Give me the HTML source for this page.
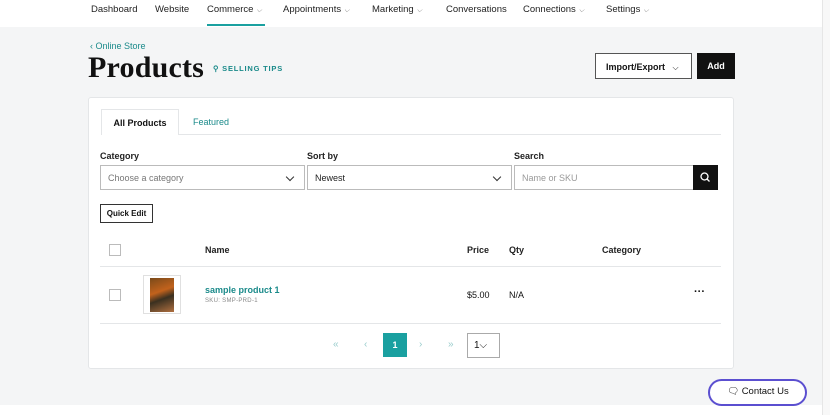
<!DOCTYPE html>
<html><head><style>
*{box-sizing:border-box;margin:0;padding:0}
body{width:830px;height:415px;overflow:hidden;background:#fff;font-family:"Liberation Sans",sans-serif;color:#111;position:relative}
.a{position:absolute}
.nav{top:0;left:0;width:822px;height:27px;background:#fff;font-size:9.5px;color:#222}
.nav span{position:absolute;top:4px}
.car{font-size:7px;color:#888;margin-left:3px}
.page{top:27px;left:0;width:822px;height:378px;background:#f4f5f6}
.sb{top:0;left:822px;width:8px;height:415px;background:#f8f8f8;border-left:1px solid #e6e6e6}
.card{left:88px;top:97px;width:646px;height:272px;background:#fff;border:1px solid #e4e6e8;border-radius:3px}
.lbl{font-size:9px;font-weight:bold;color:#222}
.inp{height:25px;border:1px solid #bbb;background:#fff;font-size:9px;color:#777;padding:7px 7px}
.chev{position:absolute;right:11px;top:8px;width:6px;height:6px;border-right:1.2px solid #333;border-bottom:1.2px solid #333;transform:rotate(45deg)}
.cb{width:12px;height:12px;border:1px solid #bbb;background:#fff}
.th{font-size:9px;font-weight:bold;color:#222;top:245px}
.hr{height:1px;background:#e4e6e8}
</style></head><body>
<div class="a nav">
<span style="left:91px">Dashboard</span>
<span style="left:155px">Website</span>
<span style="left:207px">Commerce<i class="car">⌵</i></span>
<span style="left:283px">Appointments<i class="car">⌵</i></span>
<span style="left:372px">Marketing<i class="car">⌵</i></span>
<span style="left:446px">Conversations</span>
<span style="left:523px">Connections<i class="car">⌵</i></span>
<span style="left:606px">Settings<i class="car">⌵</i></span>
<div class="a" style="left:207px;top:24px;width:58px;height:2px;background:#1aa0a0"></div>
</div>
<div class="a page"></div>
<div class="a sb"></div>
<div class="a" style="left:90px;top:41px;font-size:9px;color:#1a8a8a">‹ Online Store</div>
<div class="a" style="left:88px;top:51px;font-family:'Liberation Serif',serif;font-weight:bold;font-size:30px;letter-spacing:0.2px;color:#111">Products</div>
<div class="a" style="left:213px;top:64px;font-size:7.5px;font-weight:bold;letter-spacing:0.8px;color:#1a8a8a">⚲ SELLING TIPS</div>
<div class="a" style="left:595px;top:53px;width:97px;height:26px;border:1px solid #555;background:#fff;font-size:9px;font-weight:bold;padding:8px 0 0 10px">Import/Export <span style="font-weight:normal;font-size:8px;margin-left:5px">⌵</span></div>
<div class="a" style="left:697px;top:53px;width:38px;height:26px;background:#111;color:#fff;font-size:9px;font-weight:bold;text-align:center;padding-top:8px">Add</div>
<div class="a card"></div>
<div class="a" style="left:101px;top:109px;width:78px;height:26px;border:1px solid #e4e6e8;border-bottom:none;background:#fff;font-size:9px;font-weight:bold;text-align:center;padding-top:8px">All Products</div>
<div class="a" style="left:193px;top:117px;font-size:9px;color:#1a8a8a">Featured</div>
<div class="a hr" style="left:179px;top:134px;width:542px"></div>
<div class="a lbl" style="left:100px;top:151px">Category</div>
<div class="a lbl" style="left:307px;top:151px">Sort by</div>
<div class="a lbl" style="left:514px;top:151px">Search</div>
<div class="a inp" style="left:100px;top:165px;width:205px">Choose a category<i class="chev"></i></div>
<div class="a inp" style="left:307px;top:165px;width:205px;color:#222">Newest<i class="chev"></i></div>
<div class="a inp" style="left:514px;top:165px;width:180px;color:#999">Name or SKU</div>
<div class="a" style="left:693px;top:165px;width:25px;height:25px;background:#111"><svg width="25" height="25"><circle cx="11.5" cy="11.5" r="3.5" fill="none" stroke="#fff" stroke-width="1.3"/><line x1="14" y1="14" x2="16.5" y2="16.5" stroke="#fff" stroke-width="1.3"/></svg></div>
<div class="a" style="left:100px;top:204px;width:53px;height:19px;border:1px solid #333;font-size:8px;font-weight:bold;text-align:center;padding-top:4px">Quick Edit</div>
<div class="a cb" style="left:109px;top:244px"></div>
<div class="a th" style="left:205px">Name</div>
<div class="a th" style="left:467px">Price</div>
<div class="a th" style="left:509px">Qty</div>
<div class="a th" style="left:602px">Category</div>
<div class="a hr" style="left:100px;top:266px;width:621px"></div>
<div class="a cb" style="left:109px;top:289px"></div>
<div class="a" style="left:143px;top:275px;width:38px;height:39px;border:1px solid #e0e0e0;background:#fff"><div style="margin:2px 0 0 6px;width:24px;height:34px;background:linear-gradient(160deg,#7a4a1a,#c2621c 40%,#3a3020 60%,#b07040)"></div></div>
<div class="a" style="left:205px;top:285px;font-size:9px;font-weight:bold;color:#1a8a8a">sample product 1</div>
<div class="a" style="left:205px;top:298px;font-size:6px;color:#888;letter-spacing:0.3px">SKU: SMP-PRD-1</div>
<div class="a" style="left:467px;top:290px;font-size:9px">$5.00</div>
<div class="a" style="left:509px;top:290px;font-size:9px">N/A</div>
<div class="a" style="left:694px;top:286px;font-size:11px;font-weight:bold">···</div>
<div class="a hr" style="left:100px;top:323px;width:621px"></div>
<div class="a" style="left:333px;top:339px;font-size:10px;color:#9cc">«</div>
<div class="a" style="left:364px;top:339px;font-size:10px;color:#9cc">‹</div>
<div class="a" style="left:383px;top:333px;width:24px;height:24px;background:#1aa0a0;color:#fff;font-size:9px;font-weight:bold;text-align:center;padding-top:7px">1</div>
<div class="a" style="left:419px;top:339px;font-size:10px;color:#9cc">›</div>
<div class="a" style="left:448px;top:339px;font-size:10px;color:#9cc">»</div>
<div class="a" style="left:467px;top:333px;width:33px;height:25px;border:1px solid #aaa;background:#fff;font-size:10px;padding:6px 0 0 6px">1⌵</div>
<div class="a" style="left:708px;top:379px;width:99px;height:27px;border:2px solid #5b4fd0;border-radius:14px;background:#fff;font-size:9.5px;color:#111;padding:5px 0 0 17px">🗨 Contact Us</div>
</body></html>
